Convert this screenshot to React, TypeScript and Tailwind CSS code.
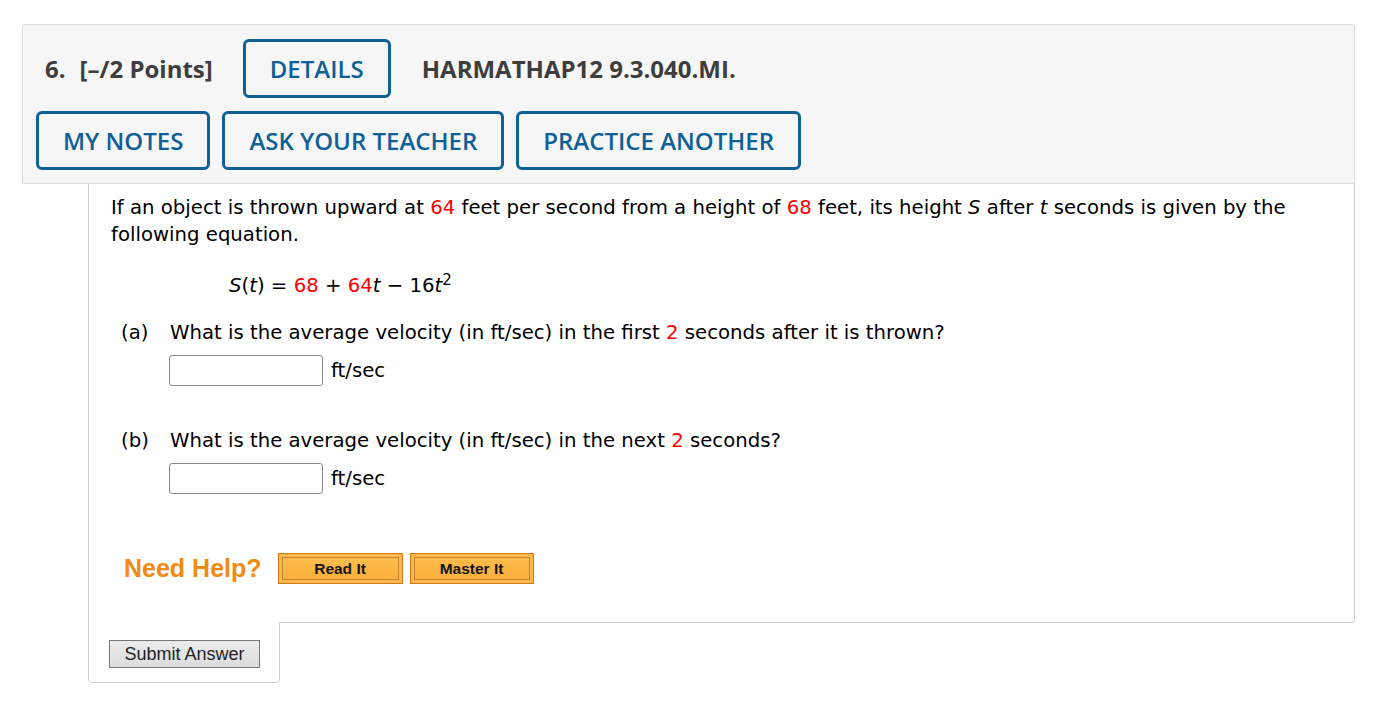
const blueBtn =
  "h-[59px] rounded-[6px] border-[3px] border-[#0f6097] bg-[#f6f6f6] px-[24px] text-[24px] font-semibold text-[#0f6097] leading-none";

function Red({ children }: { children: React.ReactNode }) {
  return <span className="text-[#ff0000]">{children}</span>;
}

function Answer() {
  return (
    <div className="mt-[9px] ml-[48px] flex items-center gap-[8px]">
      <div className="h-[31px] w-[154px] rounded-[3px] border border-[#8a8a8a] bg-white" />
      <span>ft/sec</span>
    </div>
  );
}

function HelpButton({ label, width }: { label: string; width: string }) {
  return (
    <button className={"h-[31px] border border-[#d0761c] bg-[#fcb84a] p-[3px] " + width}>
      <span className="flex h-full w-full items-center justify-center border border-[#c7852c] bg-gradient-to-b from-[#fdbd4c] to-[#fbaf3a] text-[15.5px] font-bold text-[#151515]">
        {label}
      </span>
    </button>
  );
}

export default function App() {
  return (
    <div className="min-h-screen bg-white pt-[24px] pl-[22px] pr-[18px] text-black">
      {/* header */}
      <div className="rounded-t-[3px] border border-[#dcdcdc] bg-[#f6f6f6] pt-[14px] pb-[13px] pl-[13px] font-['Open_Sans',sans-serif]">
        <div className="flex items-center pl-[9px]">
          <span className="text-[24px] font-bold text-[#3d3d3d]">6.</span>
          <span className="ml-[14px] text-[24px] font-bold text-[#3d3d3d]">[–/2 Points]</span>
          <button className={blueBtn + " ml-[30px]"}>DETAILS</button>
          <span className="ml-[31px] text-[24px] font-bold text-[#3d3d3d]">HARMATHAP12 9.3.040.MI.</span>
        </div>
        <div className="mt-[13px] flex gap-[12px]">
          <button className={blueBtn}>MY NOTES</button>
          <button className={blueBtn}>ASK YOUR TEACHER</button>
          <button className={blueBtn}>PRACTICE ANOTHER</button>
        </div>
      </div>

      {/* question body */}
      <div className="ml-[66px]">
        <div className="relative rounded-br-[4px] border-x border-b border-[#cfcfcf] bg-white pt-[10px] pb-[38px] pl-[22px] pr-[30px] font-['DejaVu_Sans',Verdana,sans-serif] text-[19.7px] leading-[27px]">
          <p>
            If an object is thrown upward at <Red>64</Red> feet per second from a height of <Red>68</Red> feet, its
            height <i>S</i> after <i>t</i> seconds is given by the following equation.
          </p>
          <p className="mt-[24px] pl-[118px]">
            <i>S</i>(<i>t</i>) = <Red>68</Red> + <Red>64</Red>
            <i>t</i> − 16<i>t</i>
            <sup className="text-[15px]">2</sup>
          </p>

          <div className="mt-[20px] pl-[10px]">
            <div className="flex">
              <span className="w-[49px]">(a)</span>
              <span>
                What is the average velocity (in ft/sec) in the first <Red>2</Red> seconds after it is thrown?
              </span>
            </div>
            <Answer />
          </div>

          <div className="mt-[41px] pl-[10px]">
            <div className="flex">
              <span className="w-[49px]">(b)</span>
              <span>
                What is the average velocity (in ft/sec) in the next <Red>2</Red> seconds?
              </span>
            </div>
            <Answer />
          </div>

          <div className="mt-[59px] flex items-center pl-[13px] font-['Liberation_Sans',Arial,sans-serif]">
            <span className="text-[25px] font-bold text-[#ef8a12]">Need Help?</span>
            <div className="ml-[16px]">
              <HelpButton label="Read It" width="w-[125px]" />
            </div>
            <div className="ml-[7px]">
              <HelpButton label="Master It" width="w-[124px]" />
            </div>
          </div>
        </div>

        {/* submit tab */}
        <div className="relative -mt-px flex h-[61px] w-[192px] items-start rounded-b-[5px] border-x border-b border-[#cfcfcf] bg-white pt-[18px] pl-[20px]">
          <button className="h-[28px] w-[151px] border border-[#767676] bg-gradient-to-b from-[#ececec] to-[#dcdcdc] font-['Liberation_Sans',Arial,sans-serif] text-[18px] text-[#222]">
            Submit Answer
          </button>
        </div>
      </div>
    </div>
  );
}
